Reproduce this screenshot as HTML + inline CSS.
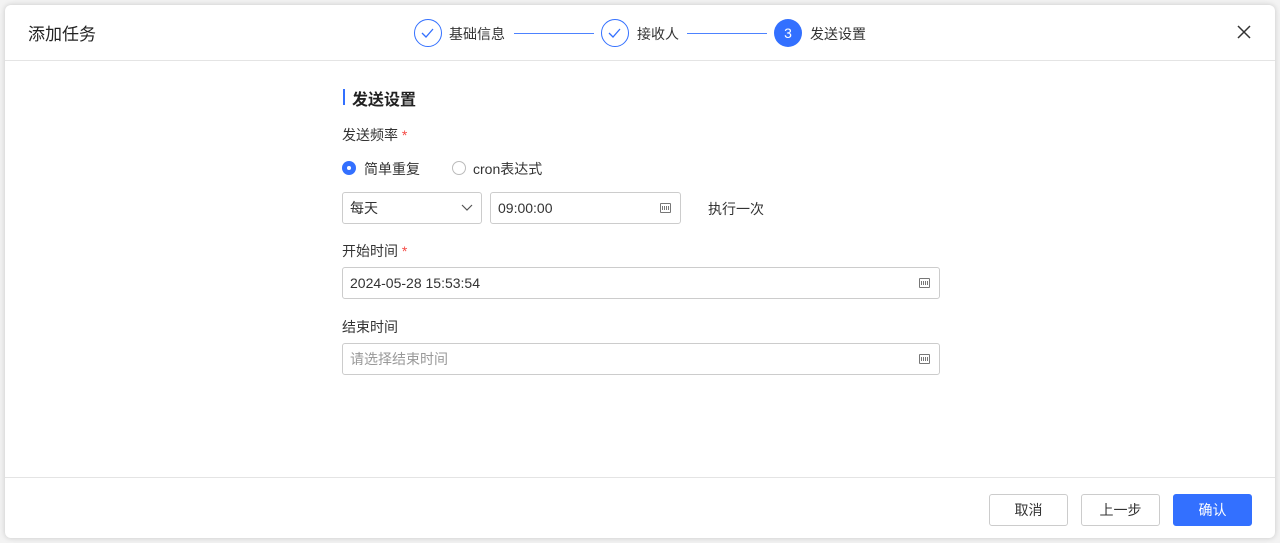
<!DOCTYPE html>
<html><head><meta charset="utf-8"><style>
*{box-sizing:border-box;margin:0;padding:0}
body{width:1280px;height:543px;background:#f3f3f3;font-family:"Liberation Sans","Noto Sans CJK SC",sans-serif;color:#333;position:relative;overflow:hidden;font-size:14px}
.dlg{position:absolute;left:5px;top:5px;width:1270px;height:533px;background:#fff;border-radius:6px;box-shadow:0 0 6px rgba(0,0,0,.18)}
.a{position:absolute;white-space:nowrap}
.hd{position:absolute;left:0;top:55px;width:100%;height:1px;background:#e4e4e4}
.ft{position:absolute;left:0;top:472px;width:100%;height:1px;background:#e4e4e4}
.ck{position:absolute;width:28px;height:28px;border:1.5px solid #3370ff;border-radius:50%;top:14px}
.ln{position:absolute;height:1px;background:#4d82ff;top:28px}
.inp{position:absolute;border:1px solid #ccc;border-radius:3px;height:32px;font-size:14px;line-height:30px;padding-left:7px;color:#333}
.cal{position:absolute;right:9px;top:10px;width:11px;height:10px;border:1px solid #777;border-radius:1px}
.cal:before{content:"";position:absolute;left:1px;top:2px;width:7px;height:4px;background:repeating-linear-gradient(90deg,#777 0 1px,transparent 1px 2px)}
.btn{position:absolute;top:489px;height:32px;width:79px;border:1px solid #ccc;border-radius:3px;text-align:center;line-height:30px;font-size:14px;background:#fff}
</style></head><body>
<div class="dlg">
<div class="a" style="left:23px;top:15px;font-size:17px;color:#222">添加任务</div>
<div class="ck" style="left:409px"><svg width="25" height="25" viewBox="0 0 25 25" style="position:absolute;left:0;top:0"><path d="M7 13l4 4 7-8" fill="none" stroke="#3370ff" stroke-width="1.3"/></svg></div>
<div class="a" style="left:444px;top:19px">基础信息</div>
<div class="ln" style="left:509px;width:80px"></div>
<div class="ck" style="left:596px"><svg width="25" height="25" viewBox="0 0 25 25" style="position:absolute;left:0;top:0"><path d="M7 13l4 4 7-8" fill="none" stroke="#3370ff" stroke-width="1.3"/></svg></div>
<div class="a" style="left:632px;top:19px">接收人</div>
<div class="ln" style="left:682px;width:80px"></div>
<div class="a" style="left:769px;top:14px;width:28px;height:28px;border-radius:50%;background:#3370ff;color:#fff;text-align:center;line-height:28px;font-size:14px">3</div>
<div class="a" style="left:805px;top:19px">发送设置</div>
<svg class="a" style="left:1231px;top:19px" width="16" height="16" viewBox="0 0 16 16"><path d="M2 2l12 12M14 2L2 14" stroke="#333" stroke-width="1.5"/></svg>
<div class="hd"></div>
<div class="a" style="left:338px;top:84px;width:2px;height:16px;background:#3370ff"></div>
<div class="a" style="left:347px;top:81px;font-size:16px;font-weight:bold;color:#222">发送设置</div>
<div class="a" style="left:337px;top:120px">发送频率<span style="color:#f54a45"> *</span></div>
<div class="a" style="left:337px;top:156px;width:14px;height:14px;border-radius:50%;background:#3370ff"><div style="position:absolute;left:5px;top:5px;width:4px;height:4px;border-radius:50%;background:#fff"></div></div>
<div class="a" style="left:359px;top:154px">简单重复</div>
<div class="a" style="left:447px;top:156px;width:14px;height:14px;border-radius:50%;border:1px solid #bbb"></div>
<div class="a" style="left:468px;top:154px">cron表达式</div>
<div class="inp" style="left:337px;top:187px;width:140px">每天<svg style="position:absolute;right:8px;top:11px" width="12" height="8" viewBox="0 0 12 8"><path d="M1 1l5 5 5-5" fill="none" stroke="#555" stroke-width="1.2"/></svg></div>
<div class="inp" style="left:485px;top:187px;width:191px">09:00:00<div class="cal"></div></div>
<div class="a" style="left:703px;top:194px">执行一次</div>
<div class="a" style="left:337px;top:236px">开始时间<span style="color:#f54a45"> *</span></div>
<div class="inp" style="left:337px;top:262px;width:598px">2024-05-28 15:53:54<div class="cal"></div></div>
<div class="a" style="left:337px;top:312px">结束时间</div>
<div class="inp" style="left:337px;top:338px;width:598px;color:#999">请选择结束时间<div class="cal"></div></div>
<div class="ft"></div>
<div class="btn" style="left:984px">取消</div>
<div class="btn" style="left:1076px">上一步</div>
<div class="btn" style="left:1168px;background:#3370ff;border-color:#3370ff;color:#fff">确认</div>
</div>
</body></html>
